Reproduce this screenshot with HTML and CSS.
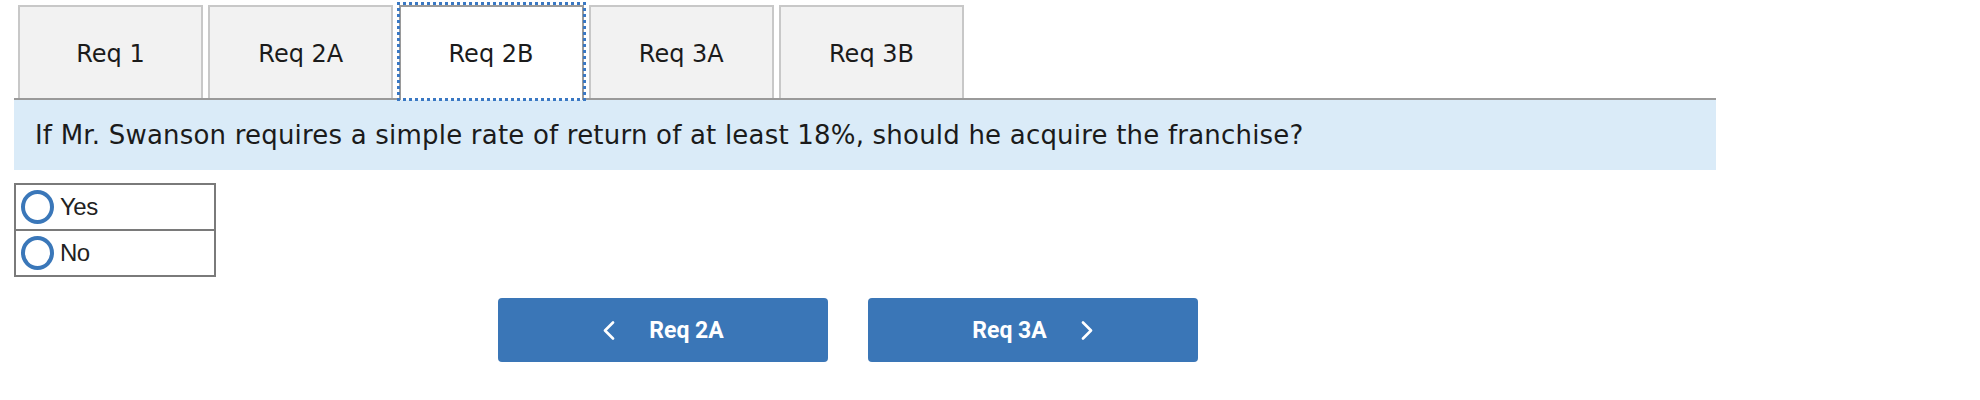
FILE: index.html
```html
<!DOCTYPE html>
<html lang="en">
<head>
<meta charset="utf-8">
<title>Req 2B</title>
<link rel="stylesheet" href="styles.css">
</head>
<body>
<div class="page">
  <div class="tabs">
    <div class="tab">Req 1</div>
    <div class="tab">Req 2A</div>
    <div class="tab active">Req 2B</div>
    <div class="tab">Req 3A</div>
    <div class="tab">Req 3B</div>
  </div>
  <div class="question">If Mr. Swanson requires a simple rate of return of at least 18%, should he acquire the franchise?</div>
  <div class="choices">
    <label class="choice"><span class="radio"></span><span class="choice-text">Yes</span></label>
    <label class="choice"><span class="radio"></span><span class="choice-text">No</span></label>
  </div>
  <div class="nav">
    <button class="navbtn" type="button">
      <svg class="chev" width="13" height="19" viewBox="0 0 13 19"><polyline points="11,1.5 3,9.5 11,17.5" fill="none" stroke="#fff" stroke-width="2.6" stroke-linecap="round" stroke-linejoin="round"/></svg>
      <span>Req 2A</span>
    </button>
    <button class="navbtn" type="button">
      <span>Req 3A</span>
      <svg class="chev" width="13" height="19" viewBox="0 0 13 19"><polyline points="2,1.5 10,9.5 2,17.5" fill="none" stroke="#fff" stroke-width="2.6" stroke-linecap="round" stroke-linejoin="round"/></svg>
    </button>
  </div>
</div>
</body>
</html>
```
FILE: styles.css
```css
html, body {
  margin: 0;
  padding: 0;
  background: #ffffff;
}

body {
  font-family: "DejaVu Sans", Verdana, sans-serif;
  color: #1b1b1b;
}

.page {
  padding: 5px 0 0 14px;
  width: 1702px;
}

.tabs {
  display: flex;
  align-items: flex-start;
  gap: 5.25px;
  padding-left: 4px;
  height: 93px;
  border-bottom: 2px solid #9a9a9a;
}

.tab {
  box-sizing: border-box;
  width: 185px;
  height: 93px;
  padding-top: 3px;
  display: flex;
  align-items: center;
  justify-content: center;
  background: #f2f2f2;
  border: 2px solid #c8c8c8;
  border-bottom: none;
  font-size: 24px;
  color: #1b1b1b;
}

.tab.active {
  position: relative;
  height: 95px;
  padding-bottom: 2px;
  background: #ffffff;
  border-color: #9a9a9a;
}

.tab.active::after {
  content: "";
  position: absolute;
  top: -5px;
  left: -4px;
  right: -4px;
  bottom: -1px;
  border: 3px dotted #3a78c3;
  pointer-events: none;
}

.question {
  box-sizing: border-box;
  height: 70px;
  padding-left: 21px;
  display: flex;
  align-items: center;
  background: #daebf8;
  font-size: 26px;
  letter-spacing: 0.2px;
  color: #1b1b1b;
}

.choices {
  box-sizing: border-box;
  width: 202px;
  margin-top: 13px;
  border: 2px solid #7a7a7a;
}

.choice {
  display: flex;
  align-items: center;
  height: 44px;
  padding-left: 5px;
  font-family: "Liberation Sans", Arial, sans-serif;
  font-size: 24px;
  letter-spacing: -0.5px;
  color: #222222;
}

.choice + .choice {
  border-top: 2px solid #7a7a7a;
}

.radio {
  box-sizing: border-box;
  width: 33px;
  height: 34px;
  margin-right: 6px;
  border: 4px solid #3a77b9;
  border-radius: 50%;
  flex: none;
}

.nav {
  display: flex;
  gap: 40px;
  margin-top: 21px;
  padding-left: 484px;
}

.navbtn {
  box-sizing: border-box;
  width: 330px;
  height: 64px;
  display: flex;
  align-items: center;
  justify-content: center;
  gap: 34px;
  padding: 0;
  border: none;
  border-radius: 4px;
  background: #3a76b7;
  color: #ffffff;
  font-family: Roboto, "Liberation Sans", sans-serif;
  font-weight: 700;
  font-size: 23px;
}

.chev {
  display: block;
  flex: none;
}
```
